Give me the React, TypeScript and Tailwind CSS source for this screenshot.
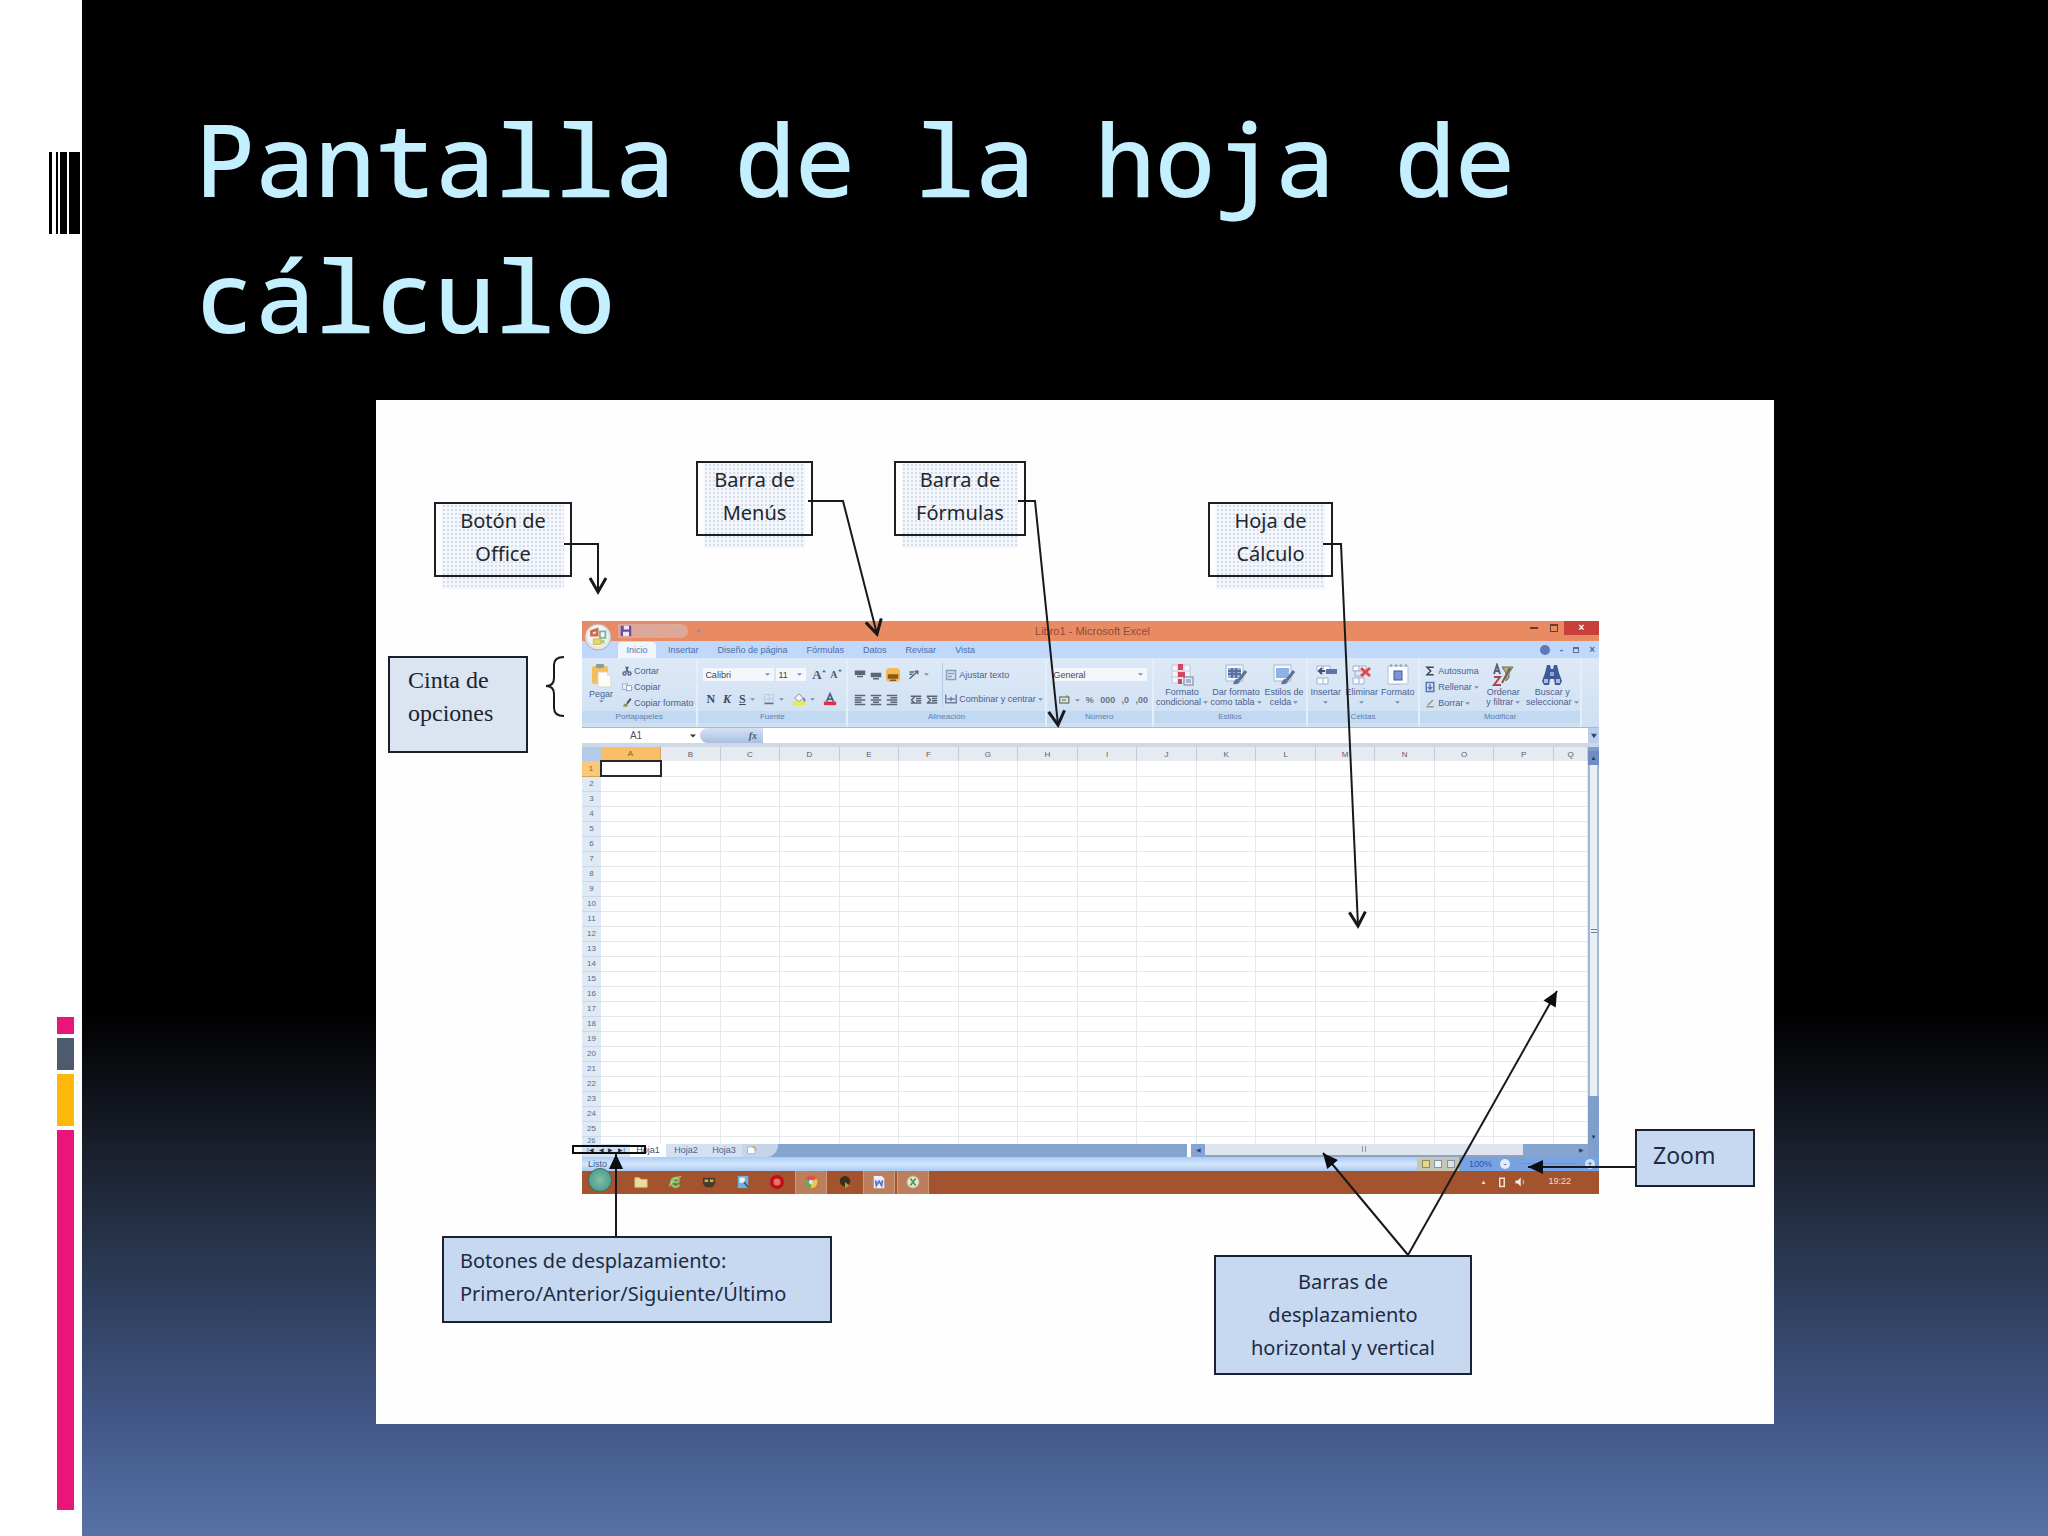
import React from "react";

type Kids = { children?: React.ReactNode };

const COLUMNS = "ABCDEFGHIJKLMNOPQ".split("");
const ROWS = Array.from({ length: 25 }, (_, i) => i + 1);
const TABS = ["Insertar", "Diseño de página", "Fórmulas", "Datos", "Revisar", "Vista"];

/* ---------- small drawings ---------- */

function Glyph({ size = "size-3", children }: Kids & { size?: string }) {
  return (
    <svg viewBox="0 0 16 16" className={size + " shrink-0"} fill="none" aria-hidden="true">
      {children}
    </svg>
  );
}

function Chevron() {
  return (
    <svg viewBox="0 0 8 4" className="h-[3px] w-[5px] shrink-0" aria-hidden="true">
      <path d="M0 0h8L4 4z" fill="#7d8fb0" />
    </svg>
  );
}

function OfficeLogo() {
  return (
    <svg viewBox="0 0 30 30" className="size-7" aria-hidden="true">
      <circle cx="15" cy="15" r="14" fill="#e4e6e8" stroke="#b9a9a0" />
      <circle cx="15" cy="14" r="11" fill="#f4f5f4" />
      <path d="M8 9l6-2v6H8z" fill="none" stroke="#cc6a4c" strokeWidth="3" />
      <path d="M17 9h6v7h-6z" fill="none" stroke="#7fb3a0" strokeWidth="2" />
      <path d="M10 17h8v6h-8z" fill="#e6d56a" stroke="#cdb94a" />
      <path d="M18 18h4v4h-4z" fill="#9ccf8c" />
    </svg>
  );
}

const PasteIcon = () => (
  <svg viewBox="0 0 22 26" className="h-[26px] w-[22px]" aria-hidden="true">
    <rect x="2" y="3" width="16" height="18" rx="2" fill="#f1bf5f" />
    <rect x="6" y="1" width="8" height="4" rx="1" fill="#8e98a8" />
    <path d="M8 9h9l4 4v11H8z" fill="#fdfdf6" stroke="#d9d6c8" />
    <path d="M17 9v4h4" fill="#dfe3ea" />
  </svg>
);
const CutIcon = () => (
  <Glyph size="size-2.5">
    <path d="M6 1l4 9M10 1L6 10" stroke="#4b5b86" strokeWidth="2" />
    <circle cx="4" cy="12" r="2.5" stroke="#4b5b86" strokeWidth="2" />
    <circle cx="12" cy="12" r="2.5" stroke="#4b5b86" strokeWidth="2" />
  </Glyph>
);
const CopyIcon = () => (
  <Glyph size="size-2.5">
    <rect x="1" y="3" width="8" height="9" fill="#e9eff8" stroke="#8093b8" />
    <rect x="7" y="6" width="8" height="8" fill="#f8fafd" stroke="#6d80a8" />
  </Glyph>
);
const BrushIcon = () => (
  <Glyph size="size-2.5">
    <path d="M14 1L8 9" stroke="#4a4f57" strokeWidth="3" />
    <path d="M3 9h6v5H2z" fill="#8a9a4c" />
  </Glyph>
);
const BorderIcon = () => (
  <Glyph>
    <path d="M2 2h12v11H2zM8 2v11M2 8h12" stroke="#a9b9d6" strokeDasharray="2 1" />
    <path d="M2 14h12" stroke="#5a6c90" strokeWidth="2" />
  </Glyph>
);
const FillIcon = () => (
  <Glyph size="size-3.5">
    <path d="M3 7l5-5 5 5-5 4z" fill="#f2f4f8" stroke="#7c8798" />
    <path d="M13 7q2 2 1 4" stroke="#5c78b0" strokeWidth="2" />
    <rect x="1" y="11" width="14" height="4" fill="#e8ec3c" />
  </Glyph>
);
const FontColorIcon = () => (
  <Glyph size="size-3.5">
    <path d="M4 11l4-9 4 9M5 8h6" stroke="#56617c" strokeWidth="2" />
    <rect x="1" y="11" width="14" height="4" fill="#dd2c4c" />
  </Glyph>
);

function LinesIcon({ d, color = "#5b6577" }: { d: string; color?: string }) {
  return (
    <Glyph>
      <path d={d} stroke={color} strokeWidth="2" />
    </Glyph>
  );
}
const V_TOP = "M1 3h14M1 5h14M1 7h14M4 10h8";
const V_MID = "M1 6h14M1 8h14M1 10h14M4 13h8";
const V_BOT = "M1 8h14M1 10h14M1 12h14M4 15h8";
const H_LEFT = "M1 2h14M1 5h9M1 8h14M1 11h9M1 14h14";
const H_CENTER = "M1 2h14M4 5h8M1 8h14M4 11h8M1 14h14";
const H_RIGHT = "M1 2h14M6 5h9M1 8h14M6 11h9M1 14h14";
const INDENT_L = "M1 3h14M8 6h7M8 9h7M1 12h14M6 4L2 8l4 4";
const INDENT_R = "M1 3h14M8 6h7M8 9h7M1 12h14M2 4l4 4-4 4";
const ORIENT = "M2 13L13 3M2 4h6M2 7h4M9 3h4v4";
const WRAP = "M2 2h12v12H2zM4 6h8M4 10h5";
const MERGE = "M1 2v12M15 2v12M1 13h14M3 8h10M8 5v6";

const CondFormatIcon = () => (
  <svg viewBox="0 0 24 24" className="size-6" aria-hidden="true">
    <path d="M2 2h18v18H2zM2 8h18M2 14h18M8 2v18M14 2v18" fill="#f3f5fa" stroke="#c3c9dd" />
    <path d="M8 1h5v6H8zM8 9h7v5H8zM8 16h4v5H8z" fill="#d6455f" />
    <rect x="14" y="14" width="9" height="8" fill="#e6ebf4" stroke="#6f7fa5" />
    <path d="M16 17h5M16 19h5" stroke="#6f7fa5" />
  </svg>
);
const TableFormatIcon = ({ plain = false }: { plain?: boolean }) => (
  <svg viewBox="0 0 24 24" className="size-6" aria-hidden="true">
    <rect x="2" y="2" width="17" height="16" fill="#f6f8fc" stroke="#aab8d4" />
    <rect x="4" y="5" width="13" height="10" fill="#8fb1ea" />
    {!plain && <path d="M4 8h13M4 11h13M8 5v10M12 5v10" stroke="#5f6f94" strokeWidth="2" />}
    <path d="M22 8l-7 9" stroke="#5f6f86" strokeWidth="3" />
    <path d="M9 21q2-6 6-5l1 3q-2 3-7 2z" fill="#5876ac" />
  </svg>
);
const CellsIcon = ({ kind }: { kind: "insert" | "delete" | "format" }) => (
  <svg viewBox="0 0 24 24" className="size-6" aria-hidden="true">
    <path d="M3 3h13v5H3zM3 15h11v6H3zM9 3v5M9 15v6" fill="#fafcff" stroke="#9fb0cf" />
    {kind === "insert" && (
      <>
        <rect x="12" y="6" width="11" height="5" fill="#5d74a6" />
        <path d="M11 8H5m3-3L5 8l3 3" fill="none" stroke="#40506f" strokeWidth="2" />
      </>
    )}
    {kind === "delete" && (
      <>
        <rect x="5" y="8" width="9" height="5" fill="#dfe8f8" stroke="#9fb0cf" />
        <path d="M11 5l9 8M20 5l-9 8" stroke="#e0484e" strokeWidth="3" />
      </>
    )}
    {kind === "format" && (
      <>
        <path d="M2 3h20v18H2z" fill="#fafcff" stroke="#b2c0da" />
        <path d="M5 1v3M10 1v3M15 1v3M20 1v3" stroke="#7686a6" />
        <rect x="8" y="8" width="8" height="9" fill="#7d95d8" stroke="#41599a" />
      </>
    )}
  </svg>
);
const SortIcon = () => (
  <svg viewBox="0 0 24 24" className="size-6" aria-hidden="true">
    <path d="M3 11l3-9 3 9M4 8h4" fill="none" stroke="#58627c" strokeWidth="2" />
    <path d="M3 14h6l-6 8h7" fill="none" stroke="#a5474d" strokeWidth="2" />
    <path d="M11 4h11l-4 6v5l-3 3v-8z" fill="#a5b08b" stroke="#6b7456" />
    <path d="M19 5l-8 15" stroke="#7b5d4a" strokeWidth="2" />
  </svg>
);
const FindIcon = () => (
  <svg viewBox="0 0 24 24" className="size-6" aria-hidden="true">
    <path d="M7 2h3l1 4h2l1-4h3l2 8 3 8-2 4h-5l-1-6h-4l-1 6H4l-2-4 3-8z" fill="#405a96" />
    <path d="M10 9h4v4h-4z" fill="#8ea6d8" />
    <path d="M4 16h4v4H4zM16 16h4v4h-4z" fill="#a8bfe8" />
  </svg>
);

/* ---------- ribbon ---------- */

function Group({ title, grow, children }: Kids & { title: string; grow: string }) {
  return (
    <section aria-label={title} className={"flex min-w-0 flex-col border-r-2 border-[#e3eefa] " + grow}>
      <div className="flex h-[52px] items-start overflow-hidden pt-1">{children}</div>
      <h3 className="h-3 bg-[#c1d9f1] text-center text-[8px] leading-3 text-[#5f7fae]">{title}</h3>
    </section>
  );
}

function Tool({ label, children }: Kids & { label: string }) {
  return (
    <button type="button" aria-label={label} className="flex items-center gap-1">
      {children}
    </button>
  );
}

function RowTool({ icon, text, menu }: { icon: React.ReactNode; text: string; menu?: boolean }) {
  return (
    <button type="button" className="flex h-4 items-center gap-0.5 whitespace-nowrap text-[9px] leading-4">
      {icon}
      {text}
      {menu && <Chevron />}
    </button>
  );
}

function BigTool({ icon, lines, width }: { icon: React.ReactNode; lines: string[]; width: string }) {
  return (
    <button type="button" className={"flex shrink-0 flex-col items-center text-[9px] leading-[10px] " + width}>
      {icon}
      {lines.map((l, i) => (
        <span key={l} className="flex items-center gap-0.5 whitespace-nowrap">
          {l}
          {i === 1 && <Chevron />}
        </span>
      ))}
      {lines.length === 1 && (
        <span className="pt-1">
          <Chevron />
        </span>
      )}
    </button>
  );
}

function Picker({ label, value, width }: { label: string; value: string; width: string }) {
  return (
    <label className={"flex h-[15px] items-center border border-[#dbe6f4] bg-[#f4f8fd] pr-1 " + width}>
      <select aria-label={label} className="min-w-0 flex-1 appearance-none bg-transparent pl-0.5 text-[9px] leading-3 text-[#3d4658] outline-none">
        <option>{value}</option>
      </select>
      <Chevron />
    </label>
  );
}

function Ribbon() {
  return (
    <div className="flex h-[70px] border-b border-[#9dbcdc] bg-linear-to-b from-[#dde9f6] to-[#cfe0f3] pt-px pr-[17px] text-[#4a618f]">
      <Group title="Portapapeles" grow="flex-[116]">
        <div className="flex w-9 shrink-0 flex-col items-center pl-0.5">
          <button type="button" className="flex flex-col items-center text-[9px] leading-[11px]">
            <PasteIcon />
            Pegar
            <Chevron />
          </button>
        </div>
        <div className="flex flex-col pl-1">
          <RowTool icon={<CutIcon />} text="Cortar" />
          <RowTool icon={<CopyIcon />} text="Copiar" />
          <RowTool icon={<BrushIcon />} text="Copiar formato" />
        </div>
      </Group>

      <Group title="Fuente" grow="flex-[150]">
        <div className="flex flex-1 flex-col gap-2.5 pt-1 pl-1">
          <div className="flex items-center">
            <Picker label="Fuente" value="Calibri" width="w-[73px]" />
            <Picker label="Tamaño" value="11" width="w-8" />
            <div className="flex flex-1 items-center justify-evenly font-['Liberation_Serif',serif] font-bold text-[#4b5774]">
              <button type="button" aria-label="Aumentar fuente" className="flex text-[13px] leading-3">
                A<svg viewBox="0 0 6 6" className="size-1" aria-hidden="true"><path d="M0 5h6L3 1z" fill="#4f6fb0" /></svg>
              </button>
              <button type="button" aria-label="Disminuir fuente" className="flex text-[10px] leading-3">
                A<svg viewBox="0 0 6 6" className="size-1" aria-hidden="true"><path d="M0 1h6L3 5z" fill="#4f6fb0" /></svg>
              </button>
            </div>
          </div>
          <div className="flex items-center gap-2 pl-1 font-['Liberation_Serif',serif] text-[12px] leading-3 text-[#3f4960]">
            <button type="button" className="font-bold">N</button>
            <button type="button" className="font-bold italic">K</button>
            <Tool label="Subrayado"><span className="font-bold underline">S</span><Chevron /></Tool>
            <Tool label="Bordes"><BorderIcon /><Chevron /></Tool>
            <Tool label="Color de relleno"><FillIcon /><Chevron /></Tool>
            <Tool label="Color de fuente"><FontColorIcon /></Tool>
          </div>
        </div>
      </Group>

      <Group title="Alineación" grow="flex-[199]">
        <div className="flex flex-col gap-3 pt-1 pl-1.5">
          <div className="flex h-[15px] items-center gap-1">
            <Tool label="Alinear arriba"><LinesIcon d={V_TOP} /></Tool>
            <Tool label="Alinear al medio"><LinesIcon d={V_MID} /></Tool>
            <span className="flex rounded-sm bg-[#f6b955] p-px">
              <Tool label="Alinear abajo"><LinesIcon d={V_BOT} color="#8a5a14" /></Tool>
            </span>
            <span className="pl-1"><Tool label="Orientación"><LinesIcon d={ORIENT} /><Chevron /></Tool></span>
          </div>
          <div className="flex items-center gap-1">
            <Tool label="Izquierda"><LinesIcon d={H_LEFT} /></Tool>
            <Tool label="Centro"><LinesIcon d={H_CENTER} /></Tool>
            <Tool label="Derecha"><LinesIcon d={H_RIGHT} /></Tool>
            <span className="flex gap-1 pl-2">
              <Tool label="Disminuir sangría"><LinesIcon d={INDENT_L} /></Tool>
              <Tool label="Aumentar sangría"><LinesIcon d={INDENT_R} /></Tool>
            </span>
          </div>
        </div>
        <div className="ml-1 flex flex-col gap-2 border-l border-[#b4cae4] pt-1 pl-0.5">
          <RowTool icon={<LinesIcon d={WRAP} color="#8c9cba" />} text="Ajustar texto" />
          <RowTool icon={<LinesIcon d={MERGE} color="#6e7f9f" />} text="Combinar y centrar" menu />
        </div>
      </Group>

      <Group title="Número" grow="flex-[107]">
        <div className="flex flex-1 flex-col gap-3 px-1 pt-1">
          <Picker label="Formato de número" value="General" width="w-full" />
          <div className="flex items-center justify-between pl-2 text-[9px] leading-3 font-bold text-[#6b7484]">
            <Tool label="Moneda"><LinesIcon d="M1 4h12v8H1zM10 2l4 4M4 8h5" color="#80896f" /><Chevron /></Tool>
            <button type="button">%</button>
            <button type="button">000</button>
            <button type="button">,0</button>
            <button type="button">,00</button>
          </div>
        </div>
      </Group>

      <Group title="Estilos" grow="flex-[154]">
        <BigTool icon={<CondFormatIcon />} lines={["Formato", "condicional"]} width="w-[56px]" />
        <BigTool icon={<TableFormatIcon />} lines={["Dar formato", "como tabla"]} width="w-[52px]" />
        <BigTool icon={<TableFormatIcon plain />} lines={["Estilos de", "celda"]} width="w-[44px]" />
      </Group>

      <Group title="Celdas" grow="flex-[112]">
        <BigTool icon={<CellsIcon kind="insert" />} lines={["Insertar"]} width="w-[36px]" />
        <BigTool icon={<CellsIcon kind="delete" />} lines={["Eliminar"]} width="w-[36px]" />
        <BigTool icon={<CellsIcon kind="format" />} lines={["Formato"]} width="w-[36px]" />
      </Group>

      <Group title="Modificar" grow="flex-[162]">
        <div className="flex w-[60px] shrink-0 flex-col pl-1">
          <RowTool icon={<LinesIcon d="M13 3H4l5 5-5 5h9" color="#3c465c" />} text="Autosuma" />
          <RowTool icon={<LinesIcon d="M3 2h10v12H3zM8 4v6M5 8l3 3 3-3" color="#5b74b4" />} text="Rellenar" menu />
          <RowTool icon={<LinesIcon d="M3 13h10M5 11l7-7" color="#8f9c86" />} text="Borrar" menu />
        </div>
        <BigTool icon={<SortIcon />} lines={["Ordenar", "y filtrar"]} width="w-[46px]" />
        <BigTool icon={<FindIcon />} lines={["Buscar y", "seleccionar"]} width="w-[52px]" />
      </Group>
    </div>
  );
}

/* ---------- Excel window ---------- */

function TitleBar() {
  return (
    <header className="flex h-5 items-center bg-[#e98b62] pl-9">
      <div className="flex h-3.5 w-[70px] items-center gap-3 rounded-r-full bg-[#dfa795] pl-0.5">
        <Tool label="Guardar">
          <Glyph>
            <path d="M1 1h14v14H1z" fill="#6d4aa3" />
            <path d="M5 1h7v5H5zM4 9h8v6H4z" fill="#ece6f4" />
          </Glyph>
        </Tool>
        <Tool label="Deshacer"><LinesIcon d="M3 5l-1 4 5 1M2 9q6-6 12 1" color="#c9aab0" /></Tool>
        <Tool label="Rehacer"><LinesIcon d="M13 5l1 4-5 1M14 9q-6-6-12 1" color="#c9aab0" /></Tool>
      </div>
      <span className="pl-2"><Chevron /></span>
      <p className="flex-1 pr-10 text-center text-[11px] leading-5 text-[#8c4b38]">Libro1 - Microsoft Excel</p>
      <div className="flex h-full items-start">
        <button type="button" aria-label="Minimizar" className="flex h-3.5 w-5 items-center justify-center">
          <span className="h-0.5 w-2 bg-[#6e3a28]" />
        </button>
        <button type="button" aria-label="Restaurar" className="flex h-3.5 w-5 items-center justify-center">
          <span className="size-2 border border-t-2 border-[#6e3a28]" />
        </button>
        <button type="button" aria-label="Cerrar" className="flex h-3.5 w-[35px] items-center justify-center bg-[#c9403a] text-[10px] leading-3 font-bold text-white">
          ×
        </button>
      </div>
    </header>
  );
}

function TabStrip() {
  return (
    <nav className="flex h-[17px] items-end bg-[#bfd8fb] pl-9 text-[9px] leading-4 text-[#4d6ea6]">
      <button type="button" className="h-4 w-[38px] rounded-t-sm bg-[#f1f6fc] text-[#5874b5]">Inicio</button>
      <div className="flex flex-1 gap-[19px] pl-3">
        {TABS.map((t) => (
          <button type="button" key={t}>{t}</button>
        ))}
      </div>
      <div className="flex h-full items-center gap-2.5 pr-1 text-[10px] font-bold">
        <button type="button" aria-label="Ayuda" className="size-2.5 rounded-full bg-[#5d7cb5]" />
        <button type="button">-</button>
        <button type="button" aria-label="Restaurar libro" className="size-1.5 border border-t-2 border-[#5d6f94]" />
        <button type="button">×</button>
      </div>
    </nav>
  );
}

function FormulaBar() {
  return (
    <div className="flex h-[19px] border-b-4 border-[#cfd8e6] bg-white text-[10px]">
      <label className="flex w-[118px] items-center pr-1">
        <input aria-label="Cuadro de nombres" defaultValue="A1" className="w-0 flex-1 text-center leading-3 text-[#4a4f58] outline-none" />
        <svg viewBox="0 0 8 4" className="h-1 w-1.5" aria-hidden="true"><path d="M0 0h8L4 4z" fill="#333" /></svg>
      </label>
      <button type="button" className="w-[63px] rounded-l-full bg-linear-to-b from-[#d6e2f3] to-[#a9bfe0] pr-1.5 text-right font-['Liberation_Serif',serif] leading-3 font-bold text-[#4f5d7c] italic">
        fx
      </button>
      <input aria-label="Barra de fórmulas" className="min-w-0 flex-1 px-1 outline-none" />
      <button type="button" aria-label="Expandir" className="flex w-[11px] items-center justify-center bg-[#b9cfea]">
        <svg viewBox="0 0 8 8" className="size-1.5" aria-hidden="true"><path d="M0 1h8L4 7z" fill="#37496f" /></svg>
      </button>
    </div>
  );
}

function Sheet() {
  return (
    <div className="flex bg-white">
      <div className="min-w-0 flex-1">
        <table className="w-full table-fixed border-collapse text-[8px] leading-[13px]">
          <colgroup>
            <col className="w-[19px]" />
            {COLUMNS.map((c) => (
              <col key={c} className={c === "Q" ? "w-[34px]" : ""} />
            ))}
          </colgroup>
          <thead>
            <tr className="h-[14px]">
              <th aria-label="Seleccionar todo" className="bg-[#b3cbe9] p-0" />
              {COLUMNS.map((c) => (
                <th
                  key={c}
                  scope="col"
                  className={
                    c === "A"
                      ? "border-r border-[#d9a253] bg-[#f8bf66] p-0 font-normal text-[#7a5a2a]"
                      : "border-r border-[#c3ccd9] bg-[#e6eaf1] p-0 font-normal text-[#59616e]"
                  }
                >
                  {c}
                </th>
              ))}
            </tr>
          </thead>
          <tbody>
            {ROWS.map((r) => (
              <tr key={r} className="h-[15px]">
                <th
                  scope="row"
                  className={
                    r === 1
                      ? "border-b border-[#d9a253] bg-[#f9c879] p-0 font-normal text-[#8a5f20]"
                      : "border-b border-[#c9d8e8] bg-[#dfeaf5] p-0 font-normal text-[#596a80]"
                  }
                >
                  {r}
                </th>
                {COLUMNS.map((c) => (
                  <td
                    key={c}
                    className={
                      r === 1 && c === "A"
                        ? "border-2 border-[#26282c] p-0"
                        : "border-r border-b border-[#e6e8ec] p-0"
                    }
                  />
                ))}
              </tr>
            ))}
            <tr className="h-[7px] text-[7px] leading-[7px]">
              <th scope="row" className="bg-[#dfeaf5] p-0 font-normal text-[#596a80]">26</th>
              {COLUMNS.map((c) => (
                <td key={c} className="border-r border-[#e6e8ec] p-0" />
              ))}
            </tr>
          </tbody>
        </table>
      </div>
      <div className="flex w-[11px] shrink-0 flex-col items-center bg-[#7e9fcc] pt-1 text-[6px] leading-3 text-[#20366a]">
        <button type="button" aria-label="Subir" className="h-3.5 w-full bg-[#6f8dc4]">▲</button>
        <div className="flex w-full flex-[336] items-center justify-center border-x-2 border-[#a5b6cf] bg-[#e9eff7]">
          <span className="h-1 w-1.5 border-y border-[#6f7f99]" />
        </div>
        <div className="flex-[34]" />
        <button type="button" aria-label="Bajar" className="h-3.5">▼</button>
      </div>
    </div>
  );
}

function SheetTabs() {
  return (
    <div className="flex h-[13px] bg-[#86a4d0] text-[9px] leading-3 text-[#4c628c]">
      <div className="flex w-12 items-center justify-evenly bg-[#d5e2f2] text-[6px] text-[#26324a]">
        <button type="button" aria-label="Primero">|◀</button>
        <button type="button" aria-label="Anterior">◀</button>
        <button type="button" aria-label="Siguiente">▶</button>
        <button type="button" aria-label="Último">▶|</button>
      </div>
      <button type="button" className="w-9 bg-white text-[#39507c]">Hoja1</button>
      <button type="button" className="w-10 bg-[#d3e0f1]">Hoja2</button>
      <button type="button" className="w-9 bg-[#d3e0f1]">Hoja3</button>
      <button type="button" aria-label="Insertar hoja" className="flex w-9 items-center rounded-br-xl bg-[#c5d5ea] pl-1">
        <Glyph><path d="M2 4h10v9H2z" fill="#fff" stroke="#9aa" /><path d="M9 3l5 5" stroke="#e0a050" strokeWidth="2" /></Glyph>
      </button>
      <div className="flex-1" />
      <div className="flex w-[401px] items-center border-l-4 border-white text-[6px] text-[#26427a]">
        <button type="button" aria-label="Izquierda" className="w-3.5">◀</button>
        <div className="flex h-full w-[318px] items-center justify-center border-b-2 border-[#8fa2c0] bg-[#dfe5ee]">
          <span className="h-1.5 w-1 border-x border-[#8c98ac]" />
        </div>
        <div className="flex-1" />
        <button type="button" aria-label="Derecha" className="w-3.5">▶</button>
      </div>
      <div className="w-[11px] bg-[#7e9fcc]" />
    </div>
  );
}

function StatusBar() {
  return (
    <footer className="flex h-[14px] items-center bg-linear-to-b from-[#a9cbf7] via-[#d5e7fc] to-[#a9c9f1] pl-1.5 text-[9px] leading-[14px] text-[#41577f]">
      <span className="flex-1">Listo</span>
      <div className="flex h-full w-[42px] items-center justify-evenly bg-[#c4c7b4]">
        <span className="size-2 border border-[#8d8a60] bg-[#e8d58a]" />
        <span className="size-2 border border-[#8592a4] bg-[#eef2f6]" />
        <span className="size-2 border border-[#8592a4] bg-[#d9e2ea]" />
      </div>
      <div className="flex h-full w-[140px] items-center gap-2 bg-[#78a3e2] pl-2.5 text-[#2a51b4]">
        <span>100%</span>
        <button type="button" aria-label="Alejar" className="flex size-2.5 items-center justify-center rounded-full bg-[#e3ecf8] leading-3">-</button>
        <span className="h-px flex-1 bg-[#6a95d6]" />
        <button type="button" aria-label="Acercar" className="mr-1 flex size-2.5 items-center justify-center rounded-full bg-[#d3e2f6] leading-3">+</button>
      </div>
    </footer>
  );
}

function TaskItem({ label, open, children }: Kids & { label: string; open?: boolean }) {
  return (
    <button
      type="button"
      aria-label={label}
      className={
        open
          ? "mx-px flex h-full w-8 items-center justify-center border-x border-[#cf9c7c] bg-[#bd7e5d]"
          : "flex h-full w-[34px] items-center justify-center"
      }
    >
      {children}
    </button>
  );
}

function Taskbar() {
  return (
    <div className="flex h-[23px] items-center bg-[#a3542f] pl-1.5 text-[9px] text-[#f6dccb]">
      <button type="button" aria-label="Inicio" className="mb-1 size-6 rounded-full border border-[#3c6b62] bg-radial from-[#7fc0aa] to-[#3f9182]" />
      <div className="flex h-full flex-1 items-center pl-3">
        <TaskItem label="Explorador"><Glyph size="size-3.5"><path d="M1 3h5l2 2h7v9H1z" fill="#ecdc9a" stroke="#d0b96c" /></Glyph></TaskItem>
        <TaskItem label="Internet Explorer"><Glyph size="size-3.5"><path d="M13 11a5 5 0 1 1 0-5M4 8h9" stroke="#83c46f" strokeWidth="3" /><path d="M1 13Q8 1 15 2" stroke="#d9dfae" /></Glyph></TaskItem>
        <TaskItem label="Reproductor"><Glyph size="size-3.5"><path d="M1 3h14v7l-3 4H4l-3-4z" fill="#4a3a22" /><path d="M3 5h4v3H3zM9 5h4v3H9z" fill="#b9b46c" /></Glyph></TaskItem>
        <TaskItem label="Notas"><Glyph size="size-3.5"><path d="M2 1h12v14H2z" fill="#6fb2dd" /><path d="M4 3h6v6H4z" fill="#eaf5fc" /><path d="M9 8l5 6" stroke="#2f557c" strokeWidth="2" /></Glyph></TaskItem>
        <TaskItem label="Grabador"><Glyph size="size-3.5"><circle cx="8" cy="8" r="6" fill="#e9736b" stroke="#c0101c" strokeWidth="4" /></Glyph></TaskItem>
        <TaskItem label="Chrome" open><Glyph size="size-3.5"><path d="M8 8L2 4a7 7 0 0 1 12 0z" fill="#dc5244" /><path d="M8 8l6-4a7 7 0 0 1-6 11z" fill="#edc845" /><path d="M8 8v7A7 7 0 0 1 2 4z" fill="#6da657" /><circle cx="8" cy="8" r="2.5" fill="#d4e4f4" /></Glyph></TaskItem>
        <TaskItem label="Juego"><Glyph size="size-3.5"><circle cx="8" cy="7" r="6" fill="#3c3018" /><path d="M8 8l5 4-5 3z" fill="#a6a04b" /></Glyph></TaskItem>
        <TaskItem label="Word" open><Glyph size="size-3.5"><path d="M2 1h9l3 3v11H2z" fill="#edf0fb" /><path d="M4 6l1 6 3-5 3 5 1-6" stroke="#5f71c4" strokeWidth="2" /></Glyph></TaskItem>
        <TaskItem label="Excel" open><Glyph size="size-3.5"><circle cx="8" cy="8" r="7" fill="#e7e6d2" stroke="#a4ae86" /><path d="M5 4l6 8M11 4l-6 8" stroke="#5d9159" strokeWidth="2" /></Glyph></TaskItem>
      </div>
      <div className="flex items-center gap-1.5 pr-7">
        <span className="pr-1 text-[6px]">▲</span>
        <Glyph><path d="M5 3h6v11H5z" stroke="#f4dfd0" strokeWidth="2" /></Glyph>
        <Glyph><path d="M2 6h3l4-4v12l-4-4H2z" fill="#f8e9de" /><path d="M12 5q2 3 0 6" stroke="#f8e9de" /></Glyph>
        <time className="pl-4">19:22</time>
      </div>
    </div>
  );
}

function ExcelWindow() {
  return (
    <div className="absolute top-[221px] left-[206px] w-[1017px] bg-white font-['Liberation_Sans',Arial,sans-serif]">
      <TitleBar />
      <TabStrip />
      <Ribbon />
      <FormulaBar />
      <Sheet />
      <SheetTabs />
      <StatusBar />
      <Taskbar />
      <button type="button" aria-label="Botón de Office" className="absolute top-0.5 left-0.5">
        <OfficeLogo />
      </button>
    </div>
  );
}

/* ---------- callouts ---------- */

function DottedNote({ place, children }: Kids & { place: string }) {
  return (
    <div className={"absolute h-[75px] text-center text-xl leading-[33px] text-[#23262d] " + place}>
      <div className="absolute top-0.5 right-2 -bottom-3 left-2 bg-[#f3f6fb] bg-[radial-gradient(#d3dcea_1px,transparent_1px)] bg-size-[4px_4px]" />
      <p className="relative h-full border-2 border-[#1d1f24]">{children}</p>
    </div>
  );
}

function BlueNote({ place, children }: Kids & { place: string }) {
  return (
    <p className={"absolute border-2 border-[#1b2233] bg-[#c6d9f1] leading-[33px] text-[#1e2b42] " + place}>
      {children}
    </p>
  );
}

function Connectors() {
  return (
    <svg viewBox="0 0 1398 1024" className="pointer-events-none absolute inset-0 size-full" fill="none" stroke="#17191d" strokeWidth="2" aria-hidden="true">
      <defs>
        <marker id="open" markerUnits="userSpaceOnUse" markerWidth="20" markerHeight="20" refX="15" refY="10" orient="auto">
          <path d="M1 2l14 8-14 8" fill="none" stroke="#17191d" strokeWidth="3" />
        </marker>
        <marker id="solid" markerUnits="userSpaceOnUse" markerWidth="18" markerHeight="18" refX="16" refY="8" orient="auto">
          <path d="M1 1l15 7-15 7z" fill="#0c0d10" stroke="none" />
        </marker>
      </defs>
      <path d="M188 144h34v48" markerEnd="url(#open)" />
      <path d="M432 101h35l34 133" markerEnd="url(#open)" />
      <path d="M642 101h17l23 224" markerEnd="url(#open)" />
      <path d="M947 144h18l17 382" markerEnd="url(#open)" />
      <path d="M188 257q-10 0-10 8v13q0 8-8 8q8 0 8 8v14q0 8 10 8" />
      <path d="M240 836v-82" markerEnd="url(#solid)" />
      <rect x="197" y="746" width="72" height="7" strokeWidth="2" stroke="#0c0d10" />
      <path d="M1259 767h-107" markerEnd="url(#solid)" />
      <path d="M1032 855l-85-102" markerEnd="url(#solid)" />
      <path d="M1032 855l149-264" markerEnd="url(#solid)" />
    </svg>
  );
}

function Diagram() {
  return (
    <figure className="relative mx-auto h-[1024px] w-[1398px] bg-[#fefefe] font-['Noto_Sans',sans-serif]">
      <ExcelWindow />
      <DottedNote place="top-[102px] left-[58px] w-[138px]">Botón de<br />Office</DottedNote>
      <DottedNote place="top-[61px] left-[320px] w-[117px]">Barra de<br />Menús</DottedNote>
      <DottedNote place="top-[61px] left-[518px] w-[132px]">Barra de<br />Fórmulas</DottedNote>
      <DottedNote place="top-[102px] left-[832px] w-[125px]">Hoja de<br />Cálculo</DottedNote>
      <p className="absolute top-[256px] left-[12px] h-[97px] w-[140px] border-2 border-[#1b1f28] bg-[#dbe5f1] pt-1.5 pl-[18px] font-['Liberation_Serif',serif] text-2xl leading-[33px] text-[#1d2430]">
        Cinta de<br />opciones
      </p>
      <BlueNote place="top-[836px] left-[66px] h-[87px] w-[390px] pt-1.5 pl-4 text-xl">
        Botones de desplazamiento:<br />Primero/Anterior/Siguiente/Último
      </BlueNote>
      <BlueNote place="top-[855px] left-[838px] h-[120px] w-[258px] pt-2 text-center text-xl">
        Barras de<br />desplazamiento<br />horizontal y vertical
      </BlueNote>
      <BlueNote place="top-[729px] left-[1259px] h-[58px] w-[120px] pt-2 pl-4 text-[23px]">Zoom</BlueNote>
      <Connectors />
    </figure>
  );
}

/* ---------- slide ---------- */

function SideStrip() {
  return (
    <aside className="flex w-[82px] shrink-0 flex-col items-end bg-white pt-[152px] pb-[26px]">
      <div className="flex h-[82px] gap-0.5 pr-0.5">
        <span className="mr-0.5 w-[3px] bg-black" />
        <span className="w-0.5 bg-black" />
        <span className="w-[7px] bg-black" />
        <span className="w-[11px] bg-black" />
      </div>
      <div className="mt-auto mr-2 flex w-[17px] flex-col gap-1">
        <span className="h-[17px] bg-[#ea157a]" />
        <span className="h-8 bg-[#4e5b6f]" />
        <span className="h-[52px] bg-[#feb80a]" />
        <span className="h-[380px] bg-[#ea157a]" />
      </div>
    </aside>
  );
}

export default function App() {
  return (
    <div className="flex min-h-screen">
      <SideStrip />
      <main className="flex-1 bg-[linear-gradient(#000_66%,#1a202d_75%,#2b3a55_83%,#43598a_93%,#5872a6)] pt-[90px]">
        <h1 className="max-w-[1640px] pl-[113px] font-['Noto_Sans_Mono','DejaVu_Sans_Mono',monospace] text-[100px] leading-[136px] font-medium text-[#c3efff]">
          Pantalla de la hoja de cálculo
        </h1>
        <div className="pt-[38px] pr-1 pl-[24px]">
          <Diagram />
        </div>
      </main>
    </div>
  );
}
